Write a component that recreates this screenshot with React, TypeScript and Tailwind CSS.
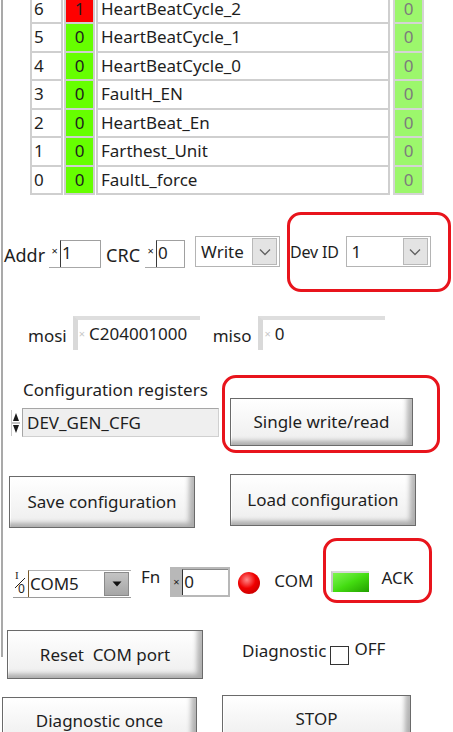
import React from "react";

const rows = [
  { i: 6, b: 1, name: "HeartBeatCycle_2" },
  { i: 5, b: 0, name: "HeartBeatCycle_1" },
  { i: 4, b: 0, name: "HeartBeatCycle_0" },
  { i: 3, b: 0, name: "FaultH_EN" },
  { i: 2, b: 0, name: "HeartBeat_En" },
  { i: 1, b: 0, name: "Farthest_Unit" },
  { i: 0, b: 0, name: "FaultL_force" },
];

function Btn({ label, className }: { label: string; className: string }) {
  return (
    <div
      className={
        "flex items-center justify-center border border-[#6a6a6a] bg-gradient-to-b from-white to-[#ededed] text-[17px] text-[#1e1e1e] shadow-[inset_-5px_-4px_5px_rgba(0,0,0,0.28),inset_1px_1px_0_#ffffff] " +
        className
      }
    >
      {label}
    </div>
  );
}

function NumCtl({ value, w }: { value: string; w: string }) {
  return (
    <div className="flex h-[28px] items-stretch border-b border-[#a8a8a8]">
      <span className="flex w-[11px] items-start justify-center pt-[5px] text-[11px] leading-[12px] text-[#222]">×</span>
      <div className={"border-t border-r border-[#a0a0a0] border-l border-l-[#3a3a3a] pl-[1px] text-[17px] leading-[24px] " + w}>{value}</div>
    </div>
  );
}

function Dropdown({ value, w }: { value: string; w: string }) {
  return (
    <div className={"flex h-[31px] items-center border border-[#b4b4b4] bg-white pl-[5px] pr-[2px] " + w}>
      <span className="flex-1 text-[17px] leading-[20px]">{value}</span>
      <div className="flex h-[27px] w-[25px] items-center justify-center border border-[#b8b8b8] bg-[#e3e3e3]">
        <svg width="12" height="8" viewBox="0 0 12 8">
          <path d="M1 1.5 L6 6.5 L11 1.5" fill="none" stroke="#606060" strokeWidth="1.3" />
        </svg>
      </div>
    </div>
  );
}

export default function App() {
  return (
    <div
      className="relative h-[732px] w-[453px] overflow-hidden bg-white text-[#1e1e1e]"
      style={{ fontFamily: '"Noto Sans", "Open Sans", sans-serif' }}
    >
      <div className="absolute left-[1px] top-0 h-[657px] w-[2px] bg-[#a9a9a9]" />

      {/* register table */}
      <div className="mt-[-4.5px] flex flex-col">
        {rows.map((r) => (
          <div key={r.i} className="flex h-[28.5px] pl-[30px]">
            <div className="w-[33px] border-x-2 border-b-2 border-[#cfcfcf] bg-white pl-[2px] text-[17px] leading-[26px]">{r.i}</div>
            <div className="ml-[1px] w-[31px] border-x-2 border-b-2 border-[#cfcfcf]">
              <div className={"h-full text-center text-[17px] leading-[26px] " + (r.b ? "bg-[#ff0000]" : "bg-[#66ff00]")}>{r.b}</div>
            </div>
            <div className="ml-[1px] w-[294px] border-x-2 border-b-2 border-[#cfcfcf] bg-white pl-[3px] text-[17px] leading-[26px]">{r.name}</div>
            <div className="ml-[3px] w-[31px] border-x-2 border-b-2 border-[#d4d4d4]">
              <div className="h-full bg-[#9cf76c] text-center text-[17px] leading-[26px] text-[#7c7c7c]">0</div>
            </div>
          </div>
        ))}
      </div>

      {/* Addr row */}
      <div className="mt-[41px] flex h-[32px] items-start">
        <span className="ml-[4px] mt-[8px] text-[18px] leading-[22px]">Addr</span>
        <div className="ml-[4px] mt-[4px]">
          <NumCtl value="1" w="w-[41px]" />
        </div>
        <span className="ml-[5px] mt-[8px] text-[18px] leading-[22px]">CRC</span>
        <div className="ml-[5px] mt-[4px]">
          <NumCtl value="0" w="w-[29px]" />
        </div>
        <div className="ml-[10px]">
          <Dropdown value="Write" w="w-[85px]" />
        </div>
        <div className="relative ml-[10px] flex items-start">
          <div className="pointer-events-none absolute left-[-3px] top-[-24px] h-[80px] w-[164px] rounded-[14px] border-[3px] border-[#e8141c]" />
          <span className="mt-[5px] text-[16px] leading-[22px] tracking-[-0.2px]">Dev ID</span>
          <div className="ml-[7px]">
            <Dropdown value="1" w="w-[85px]" />
          </div>
        </div>
      </div>

      {/* mosi / miso */}
      <div className="mt-[48px] flex h-[34px] items-start">
        <span className="ml-[28px] mt-[9px] text-[17px] leading-[22px]">mosi</span>
        <div className="ml-[6px] flex h-[34px] w-[127px] items-start border-l-[5px] border-t-[4px] border-l-[#d9d9d9] border-t-[#dedede] pt-[3px]">
          <span className="ml-[1px] mt-[5px] text-[11px] leading-[12px] text-[#c8c8c8]">×</span>
          <span className="ml-[4px] text-[17px] leading-[22px]">C204001000</span>
        </div>
        <span className="ml-[13px] mt-[9px] text-[17px] leading-[22px]">miso</span>
        <div className="ml-[7px] flex h-[34px] w-[127px] items-start border-l-[5px] border-t-[4px] border-l-[#d9d9d9] border-t-[#dedede] pt-[3px]">
          <span className="ml-[1px] mt-[5px] text-[11px] leading-[12px] text-[#c8c8c8]">×</span>
          <span className="ml-[4px] text-[17px] leading-[22px]">0</span>
        </div>
      </div>

      {/* Configuration registers */}
      <div className="mt-[30px] flex items-start">
        <div className="ml-[11px] flex flex-col">
          <span className="ml-[12px] text-[17px] leading-[20px]">Configuration registers</span>
          <div className="mt-[8px] flex items-center">
            <svg width="10" height="28" viewBox="0 0 10 28">
              <path d="M2 12 L5 4 L8 12 Z" fill="#1a1a1a" />
              <path d="M2 16 L5 24 L8 16 Z" fill="#1a1a1a" />
              <line x1="1" y1="14" x2="9" y2="14" stroke="#888" />
              <line x1="0.5" y1="1" x2="0.5" y2="27" stroke="#c8c8c8" />
            </svg>
            <div className="ml-[1px] flex h-[29px] w-[197px] items-center border border-[#a6a6a6] border-r-[#d0d0d0] border-b-[#d0d0d0] bg-[#efefef] pl-[4px] text-[17px]">
              DEV_GEN_CFG
            </div>
          </div>
        </div>
        <div className="relative ml-[11px] mt-[18px]">
          <div className="pointer-events-none absolute left-[-8px] top-[-23px] h-[78px] w-[218px] rounded-[14px] border-[3px] border-[#e8141c]" />
          <Btn label="Single write/read" className="h-[48px] w-[183px]" />
        </div>
      </div>

      {/* Save / Load */}
      <div className="mt-[28px] flex items-start">
        <Btn label="Save configuration" className="ml-[9px] mt-[2px] h-[52px] w-[186px]" />
        <Btn label="Load configuration" className="ml-[35px] h-[52px] w-[186px]" />
      </div>

      {/* COM row */}
      <div className="mt-[39px] flex h-[31px] items-start">
        <div className="ml-[13px] mt-[3px] flex h-[28px] items-stretch border-b border-[#9a9a9a]">
          <div className="relative h-[27px] w-[15px]">
            <span className="absolute left-[2px] top-[-1px] text-[11px] leading-[12px]" style={{ fontFamily: '"Liberation Serif", serif' }}>I</span>
            <svg className="absolute left-0 top-0" width="15" height="27" viewBox="0 0 15 27">
              <line x1="2" y1="18" x2="12" y2="8" stroke="#222" strokeWidth="1" />
            </svg>
            <span className="absolute left-[5px] top-[12px] text-[12px] leading-[14px]">0</span>
          </div>
          <div className="flex w-[103px] items-center border-l border-t border-l-[#7a5a2a] border-t-[#b0b0b0]">
            <span className="flex-1 pl-[1px] text-[17px] leading-[22px]">COM5</span>
            <div className="mr-[2px] flex h-[24px] w-[25px] items-center justify-center border border-[#8a8a8a] bg-gradient-to-b from-[#c4c4c4] to-[#a6a6a6]">
              <svg width="10" height="6" viewBox="0 0 10 6">
                <path d="M0.5 0.5 L9.5 0.5 L5 5.5 Z" fill="#111" />
              </svg>
            </div>
          </div>
        </div>
        <span className="ml-[10px] mt-[-1px] text-[17px] leading-[22px]">Fn</span>
        <div className="ml-[10px] flex h-[30px] w-[60px] items-stretch bg-[#b8b8b8]">
          <span className="flex w-[12px] items-center justify-center text-[11px] leading-[12px] text-[#222]">×</span>
          <div className="my-[2px] mr-[2px] flex-1 border-l border-l-[#333] border-t border-t-[#888] bg-white pl-[1px] text-[17px] leading-[24px]">0</div>
        </div>
        <div className="ml-[8px] mt-[5px] h-[22px] w-[22px] rounded-full bg-[radial-gradient(circle_at_40%_35%,#ff8a8a_0%,#f00000_45%,#b00000_100%)]" />
        <span className="ml-[14px] mt-[3px] text-[17px] leading-[22px]">COM</span>
        <div className="relative ml-[18px] mt-[4px] flex items-start">
          <div className="pointer-events-none absolute left-[-8px] top-[-33px] h-[65px] w-[109px] rounded-[14px] border-[3px] border-[#e8141c]" />
          <div className="h-[21px] w-[38px] border-l-2 border-t-2 border-l-[#c8c8c8] border-t-[#d8d8d8] bg-gradient-to-br from-[#7cf64a] via-[#44dd11] to-[#22a000]" />
          <span className="ml-[12px] mt-[-4px] text-[17px] leading-[22px]">ACK</span>
        </div>
      </div>

      {/* Reset row */}
      <div className="mt-[32px] flex items-start">
        <Btn label="Reset  COM port" className="ml-[7px] h-[49px] w-[196px] whitespace-pre" />
        <span className="ml-[39px] mt-[10px] text-[17px] leading-[22px]">Diagnostic</span>
        <div className="ml-[4px] mt-[16px] h-[19px] w-[19px] border-[1.5px] border-[#333] bg-white" />
        <span className="ml-[5px] mt-[8px] text-[17px] leading-[22px]">OFF</span>
      </div>

      {/* bottom row */}
      <div className="mt-[16px] flex items-start">
        <Btn label="Diagnostic once" className="ml-[2px] mt-[2px] h-[48px] w-[195px]" />
        <Btn label="STOP" className="ml-[25px] h-[48px] w-[189px]" />
      </div>
    </div>
  );
}
